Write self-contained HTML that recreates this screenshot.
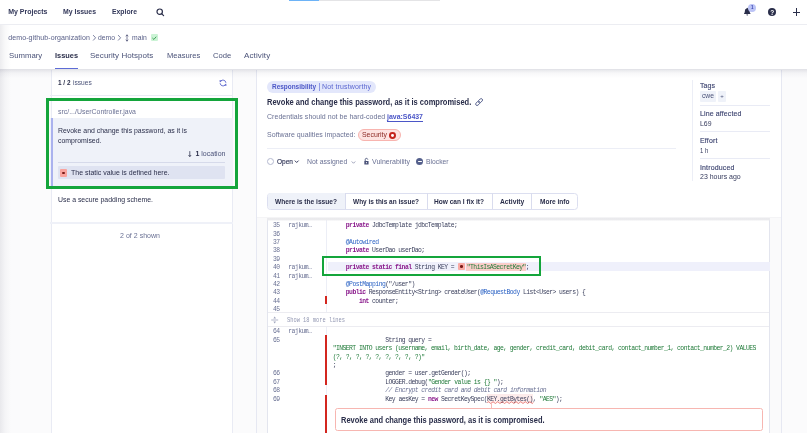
<!DOCTYPE html>
<html lang="en"><head><meta charset="utf-8"><title>Issues - demo</title>
<style>
html,body{margin:0;padding:0;background:#fbfbfc}
#app{will-change:transform;position:relative;width:807px;height:433px;overflow:hidden;font-family:"Liberation Sans", sans-serif;}
#app div,#app svg,#app span.t,#app span.c{position:absolute}
#app svg{overflow:visible}
.t{white-space:nowrap;display:block}
.c{white-space:pre;display:block;font-family:"Liberation Mono", monospace;font-size:6.4px;line-height:8.4px;height:8.4px;letter-spacing:-0.5551px;color:#3a3f5c}
.c.n{color:#6a7194}
</style></head><body><div id="app">
<div style="left:0px;top:0px;width:807px;height:433px;background:#fbfbfc"></div>
<div style="left:50.5px;top:70px;width:182px;height:363px;box-sizing:border-box;background:#fff;border-left:1px solid #e9ebf4;border-right:1px solid #e9ebf4"></div>
<div style="left:255.8px;top:70px;width:526.4px;height:363px;box-sizing:border-box;background:#fff;border-left:1px solid #e6e8f2;border-right:1px solid #e6e8f2"></div>
<span class="t" style="left:58px;top:77.6px;font-size:7px;line-height:9.8px;color:#2a2e4a;font-weight:700;transform:scaleX(0.9174);transform-origin:0 50%;">1 / 2</span>
<span class="t" style="left:73.25px;top:77.6px;font-size:7px;line-height:9.8px;color:#4a5278;transform:scaleX(0.9449);transform-origin:0 50%;">issues</span>
<svg style="left:218.700px;top:78.500px" width="8" height="8" viewBox="0 0 8 8" fill="none" stroke="#4b56c7" stroke-width="0.850" stroke-linecap="butt"><path d="M1.780 2.140A2.900 2.900 0 0 1 6.890 3.750"/><path d="M6.220 5.860A2.900 2.900 0 0 1 1.110 4.250"/><path d="M0.500 1.300L2.900 1.500 0.900 3.500z" fill="#4b56c7" stroke="none"/><path d="M7.500 6.700L5.100 6.500 7.100 4.500z" fill="#4b56c7" stroke="none"/></svg>
<div style="left:50px;top:94.5px;width:182.5px;height:1px;background:#e9ebf4"></div>
<span class="t" style="left:58px;top:107.1px;font-size:7px;line-height:9.8px;color:#6a7194;transform:scaleX(0.9924);transform-origin:0 50%;">src/.../UserController.java</span>
<div style="left:50px;top:118px;width:182.5px;height:67.5px;background:#eff2f9"></div>
<div style="left:50.5px;top:118px;width:2.2px;height:67.5px;background:#aab2ee"></div>
<span class="t" style="left:58px;top:126.1px;font-size:7px;line-height:9.8px;color:#2a2e4a;transform:scaleX(0.9866);transform-origin:0 50%;">Revoke and change this password, as it is</span>
<span class="t" style="left:58px;top:135.6px;font-size:7px;line-height:9.8px;color:#2a2e4a;transform:scaleX(0.9893);transform-origin:0 50%;">compromised.</span>
<svg style="left:188.400px;top:150.600px" width="3.600" height="6" viewBox="0 0 7.200 12" fill="none" stroke="#2a2e4a" stroke-width="1.500" stroke-linecap="round" stroke-linejoin="round"><path d="M3.600 1v10M1.400 8.600L3.600 11l2.200-2.400"/></svg>
<span class="t" style="left:195.6px;top:148.6px;font-size:7px;line-height:9.8px;color:#2a2e4a;font-weight:700;">1</span>
<span class="t" style="left:201.25px;top:148.6px;font-size:7px;line-height:9.8px;color:#4a5278;letter-spacing:0.0137px;">location</span>
<div style="left:58px;top:162px;width:167px;height:1px;background:#d6daea"></div>
<div style="left:58px;top:166px;width:167px;height:13px;background:#dfe3f1;border-radius:1px"></div>
<div style="left:60px;top:169px;width:7px;height:8px;background:#f9a39d;border-radius:1px"></div>
<div style="left:62.1px;top:171.6px;width:2.8px;height:2.8px;background:#7a1a17;border-radius:50%"></div>
<span class="t" style="left:71px;top:168.1px;font-size:7px;line-height:9.8px;color:#2a2e4a;transform:scaleX(0.9965);transform-origin:0 50%;">The static value is defined here.</span>
<span class="t" style="left:58px;top:194.85px;font-size:7px;line-height:9.8px;color:#2a2e4a;transform:scaleX(0.9845);transform-origin:0 50%;">Use a secure padding scheme.</span>
<div style="left:50px;top:222px;width:182.5px;height:1.5px;background:#eff1f8"></div>
<span class="t" style="left:120px;top:230.85px;font-size:7px;line-height:9.8px;color:#6a7194;letter-spacing:0.0247px;">2 of 2 shown</span>
<div style="left:46.4px;top:98.1px;width:192px;height:91.3px;box-sizing:border-box;border:3px solid #14a53b"></div>
<div style="left:267px;top:81px;width:108.5px;height:12px;background:#e3e7fb;border-radius:6px"></div>
<span class="t" style="left:271.75px;top:82.0px;font-size:7px;line-height:9.8px;color:#4b56c7;font-weight:700;transform:scaleX(0.9197);transform-origin:0 50%;">Responsibility</span>
<div style="left:318.6px;top:83.3px;width:0.8px;height:7.6px;background:#8f99e6"></div>
<span class="t" style="left:322px;top:82.0px;font-size:7px;line-height:9.8px;color:#5a66d0;letter-spacing:0.1448px;">Not trustworthy</span>
<span class="t" style="left:267px;top:97.12px;font-size:8.4px;line-height:11.76px;color:#2a2e4a;font-weight:700;transform:scaleX(0.8974);transform-origin:0 50%;">Revoke and change this password, as it is compromised.</span>
<svg style="left:474px;top:97.400px" width="10" height="10" viewBox="0 0 10 10" fill="none" stroke="#55608c" stroke-width="0.9"><g transform="translate(5.100 5.050) rotate(-45)"><rect x="-4.300" y="-1.400" width="5" height="2.800" rx="1.400"/><rect x="-0.700" y="-1.400" width="5" height="2.800" rx="1.400"/></g></svg>
<span class="t" style="left:267px;top:111.6px;font-size:7px;line-height:9.8px;color:#6a7194;letter-spacing:0.0417px;">Credentials should not be hard-coded</span>
<span class="t" style="left:387px;top:111.6px;font-size:7px;line-height:9.8px;color:#4b56c7;font-weight:700;transform:scaleX(0.9944);transform-origin:0 50%;">java:S6437</span>
<div style="left:387px;top:120.6px;width:36px;height:0.7px;background:#4b56c7"></div>
<span class="t" style="left:267px;top:130.1px;font-size:7px;line-height:9.8px;color:#6a7194;letter-spacing:0.0340px;">Software qualities impacted:</span>
<div style="left:357.5px;top:129px;width:43.75px;height:12.25px;box-sizing:border-box;background:#fde3e1;border:1px solid #f8b4af;border-radius:6.2px"></div>
<span class="t" style="left:362px;top:130.2px;font-size:7px;line-height:9.8px;color:#8c2a25;transform:scaleX(0.9883);transform-origin:0 50%;">Security</span>
<div style="left:388.8px;top:131.8px;width:6.9px;height:6.9px;box-sizing:border-box;border:2.3px solid #c4241d;border-radius:50%;background:#fff"></div>
<div style="left:267px;top:148.3px;width:409.25px;height:1px;background:#eceef6"></div>
<div style="left:267.4px;top:158.4px;width:6.9px;height:6.9px;box-sizing:border-box;border:0.8px solid #b4b9d0;border-radius:50%;background:#fff"></div>
<span class="t" style="left:277px;top:157.0px;font-size:7px;line-height:9.8px;color:#33385a;transform:scaleX(0.9343);transform-origin:0 50%;-webkit-text-stroke:0.15px #33385a;">Open</span>
<svg style="left:294.300px;top:159.400px" width="5.400" height="5.400" viewBox="0 0 10 10" fill="none" stroke="#33385a" stroke-width="1.800" stroke-linecap="round" stroke-linejoin="round"><path d="M2 3.500l3 3 3-3"/></svg>
<span class="t" style="left:306.75px;top:157.0px;font-size:7px;line-height:9.8px;color:#6a7194;transform:scaleX(0.9851);transform-origin:0 50%;">Not assigned</span>
<svg style="left:350.5px;top:159.8px" width="5" height="5" viewBox="0 0 10 10" fill="none" stroke="#6a7194" stroke-width="1.3" stroke-linecap="round" stroke-linejoin="round"><path d="M2 3.500l3 3 3-3"/></svg>
<svg style="left:362.500px;top:157.200px" width="6.900" height="8.500" viewBox="0 0 13 16" fill="none" stroke="#4a5278" stroke-width="1.7"><rect x="2.5" y="7.500" width="8" height="6.500" rx="1" fill="#4a5278" stroke="none"/><path d="M4.2 7.500V4.800a2.400 2.400 0 0 1 4.700-.6" stroke-linecap="round"/><circle cx="6.5" cy="10.700" r="1.100" fill="#fff" stroke="none"/></svg>
<span class="t" style="left:372px;top:157.0px;font-size:7px;line-height:9.8px;color:#6a7194;letter-spacing:0.0096px;">Vulnerability</span>
<div style="left:416.3px;top:158.4px;width:7px;height:7px;background:#55608c;border-radius:50%"></div>
<div style="left:418px;top:161.4px;width:3.6px;height:1.1px;background:#fff;border-radius:0.5px"></div>
<span class="t" style="left:425.5px;top:157.0px;font-size:7px;line-height:9.8px;color:#6a7194;transform:scaleX(0.9639);transform-origin:0 50%;">Blocker</span>
<div style="left:691.7px;top:80px;width:0.8px;height:101px;background:#eceef6"></div>
<span class="t" style="left:700px;top:80.7px;font-size:7px;line-height:9.8px;color:#3d4470;letter-spacing:0.0508px;-webkit-text-stroke:0.13px #3d4470;">Tags</span>
<div style="left:699.5px;top:90.5px;width:16.75px;height:11.25px;background:#eff2f9;border-radius:1px"></div>
<span class="t" style="left:702px;top:91.3px;font-size:7px;line-height:9.8px;color:#4a5278;transform:scaleX(0.9636);transform-origin:0 50%;">cwe</span>
<div style="left:718.25px;top:90.5px;width:8px;height:11.25px;background:#eff2f9;border-radius:1px"></div>
<span class="t" style="left:720.3px;top:92.0px;font-size:6px;line-height:8.4px;color:#4a5278;">+</span>
<div style="left:700px;top:105.2px;width:70px;height:0.8px;background:#e9ebf5"></div>
<span class="t" style="left:700px;top:109.1px;font-size:7px;line-height:9.8px;color:#3d4470;letter-spacing:0.1178px;-webkit-text-stroke:0.13px #3d4470;">Line affected</span>
<span class="t" style="left:700px;top:118.6px;font-size:7px;line-height:9.8px;color:#353a5c;transform:scaleX(0.9840);transform-origin:0 50%;">L69</span>
<div style="left:700px;top:131.2px;width:70px;height:0.8px;background:#e9ebf5"></div>
<span class="t" style="left:700px;top:136.35px;font-size:7px;line-height:9.8px;color:#3d4470;letter-spacing:0.1901px;-webkit-text-stroke:0.13px #3d4470;">Effort</span>
<span class="t" style="left:700px;top:145.6px;font-size:7px;line-height:9.8px;color:#353a5c;transform:scaleX(0.8475);transform-origin:0 50%;">1 h</span>
<div style="left:700px;top:158.4px;width:70px;height:0.8px;background:#e9ebf5"></div>
<span class="t" style="left:700px;top:162.6px;font-size:7px;line-height:9.8px;color:#3d4470;letter-spacing:0.1406px;-webkit-text-stroke:0.13px #3d4470;">Introduced</span>
<span class="t" style="left:700px;top:172.1px;font-size:7px;line-height:9.8px;color:#353a5c;transform:scaleX(0.9969);transform-origin:0 50%;">23 hours ago</span>
<div style="left:267px;top:192.5px;width:311px;height:17px;box-sizing:border-box;border:1px solid #dcdff0;border-radius:3.5px;background:#fff"></div>
<div style="left:267.8px;top:193.3px;width:77.2px;height:15.4px;background:#eff2f9;border-radius:3px 0 0 3px"></div>
<div style="left:344.6px;top:193px;width:0.8px;height:16px;background:#d9dcee"></div>
<div style="left:426.6px;top:193px;width:0.8px;height:16px;background:#d9dcee"></div>
<div style="left:492.1px;top:193px;width:0.8px;height:16px;background:#d9dcee"></div>
<div style="left:531.35px;top:193px;width:0.8px;height:16px;background:#d9dcee"></div>
<span class="t" style="left:275px;top:196.92px;font-size:7.4px;line-height:10.36px;color:#2a2e4a;font-weight:700;transform:scaleX(0.8931);transform-origin:0 50%;">Where is the issue?</span>
<span class="t" style="left:353.25px;top:196.92px;font-size:7.4px;line-height:10.36px;color:#2a2e4a;font-weight:700;transform:scaleX(0.8782);transform-origin:0 50%;">Why is this an issue?</span>
<span class="t" style="left:434.25px;top:196.92px;font-size:7.4px;line-height:10.36px;color:#2a2e4a;font-weight:700;transform:scaleX(0.8886);transform-origin:0 50%;">How can I fix it?</span>
<span class="t" style="left:500px;top:196.92px;font-size:7.4px;line-height:10.36px;color:#2a2e4a;font-weight:700;transform:scaleX(0.9081);transform-origin:0 50%;">Activity</span>
<span class="t" style="left:540px;top:196.92px;font-size:7.4px;line-height:10.36px;color:#2a2e4a;font-weight:700;transform:scaleX(0.8868);transform-origin:0 50%;">More info</span>
<div style="left:256.8px;top:216.7px;width:524.4px;height:216.5px;background:#fafafb"></div>
<div style="left:266.9px;top:217.7px;width:503.3px;height:216px;box-sizing:border-box;background:#fff;border:1px solid #e3e5ee;border-top:none"></div>
<div style="left:326.4px;top:219px;width:0.8px;height:93.5px;background:#eceef6"></div>
<div style="left:326.4px;top:326.3px;width:0.8px;height:107px;background:#eceef6"></div>
<span class="c n" style="left:273.1px;top:222.2px">35</span>
<span class="c n" style="left:288.3px;top:222.2px">rajkum…</span>
<span class="c" style="left:345.84px;top:222.2px"><b style="color:#8a1a8c">private</b> JdbcTemplate jdbcTemplate;</span>
<span class="c n" style="left:273.1px;top:230.59px">36</span>
<span class="c n" style="left:273.1px;top:238.98px">37</span>
<span class="c" style="left:345.84px;top:238.98px"><span style="color:#2b62c4">@Autowired</span></span>
<span class="c n" style="left:273.1px;top:247.37px">38</span>
<span class="c" style="left:345.84px;top:247.37px"><b style="color:#8a1a8c">private</b> UserDao userDao;</span>
<span class="c n" style="left:273.1px;top:255.76px">39</span>
<div style="left:327.6px;top:262.25px;width:442.4px;height:8.4px;background:#eff0fb"></div>
<div style="left:457.9px;top:262.6px;width:7.1px;height:7.9px;background:#f9aaa4;border-radius:1px"></div>
<div style="left:460.2px;top:265.2px;width:2.7px;height:2.7px;background:#7a1a17;border-radius:50%"></div>
<div style="left:466.3px;top:262.6px;width:59.8px;height:8px;background:#fbcdc9"></div>
<span class="c n" style="left:273.1px;top:264.15px">40</span>
<span class="c n" style="left:288.3px;top:264.15px">rajkum…</span>
<span class="c" style="left:345.84px;top:264.15px"><b style="color:#8a1a8c">private</b> <b style="color:#8a1a8c">static</b> <b style="color:#8a1a8c">final</b> String KEY = </span>
<span class="c" style="left:466.8px;top:264.15px"><span style="color:#1f7a38">"ThisIsASecretKey"</span>;</span>
<span class="c n" style="left:273.1px;top:272.54px">41</span>
<span class="c n" style="left:288.3px;top:272.54px">rajkum…</span>
<span class="c n" style="left:273.1px;top:280.93px">42</span>
<span class="c" style="left:345.84px;top:280.93px"><span style="color:#2b62c4">@PostMapping</span>("/user")</span>
<span class="c n" style="left:273.1px;top:289.32px">43</span>
<span class="c" style="left:345.84px;top:289.32px"><b style="color:#8a1a8c">public</b> ResponseEntity&lt;String&gt; createUser(<span style="color:#2b62c4">@RequestBody</span> List&lt;User&gt; users) {</span>
<span class="c n" style="left:273.1px;top:297.71px">44</span>
<span class="c" style="left:358.98px;top:297.71px"><b style="color:#8a1a8c">int</b> counter;</span>
<span class="c n" style="left:273.1px;top:306.1px">45</span>
<div style="left:324.6px;top:296.2px;width:2.2px;height:8px;background:#d3261f"></div>
<div style="left:267.9px;top:312.1px;width:501.3px;height:14.5px;box-sizing:border-box;background:#fff;border-top:1.7px solid #ececf1;border-bottom:1.7px solid #ececf1"></div>
<span class="t" style="left:286.75px;top:316.89px;font-size:6.3px;line-height:8.82px;color:#9297b2;transform:scaleX(0.8533);transform-origin:0 50%;font-family:'Liberation Mono',monospace;">Show 18 more lines</span>
<svg style="left:271.200px;top:315.600px" width="7.400" height="8" viewBox="0 0 7.400 8" fill="#9ea3bb"><rect x="0.200" y="3.600" width="7" height="0.800"/><path d="M3.700 0.600L5 2.500H2.400zM3.700 7.400L5 5.500H2.400z"/></svg>
<span class="c n" style="left:273.1px;top:328.3px">64</span>
<span class="c n" style="left:288.3px;top:328.3px">rajkum…</span>
<span class="c n" style="left:273.1px;top:336.71px">65</span>
<span class="c" style="left:385.27px;top:336.71px">String query =</span>
<span class="c" style="left:332.7px;top:345.12px"><span style="color:#1f7a38">"INSERT INTO users (username, email, birth_date, age, gender, credit_card, debit_card, contact_number_1, contact_number_2) VALUES</span></span>
<span class="c" style="left:332.7px;top:353.53px"><span style="color:#1f7a38">(?, ?, ?, ?, ?, ?, ?, ?, ?)"</span></span>
<span class="c" style="left:332.7px;top:361.94px">;</span>
<span class="c n" style="left:273.1px;top:370.35px">66</span>
<span class="c" style="left:385.27px;top:370.35px">gender = user.getGender();</span>
<span class="c n" style="left:273.1px;top:378.76px">67</span>
<span class="c" style="left:385.27px;top:378.76px">LOGGER.debug(<span style="color:#1f7a38">"Gender value is {} "</span>);</span>
<span class="c n" style="left:273.1px;top:387.17px">68</span>
<span class="c" style="left:385.27px;top:387.17px"><i style="color:#6a7194">// Encrypt credit card and debit card information</i></span>
<div style="left:487.3px;top:393.88px;width:46.2px;height:8px;background:#fdeceb"></div>
<span class="c n" style="left:273.1px;top:395.58px">69</span>
<span class="c" style="left:385.27px;top:395.58px">Key aesKey = <b style="color:#8a1a8c">new</b> SecretKeySpec(KEY.getBytes(), <span style="color:#1f7a38">"AES"</span>);</span>
<div style="left:324.6px;top:334.8px;width:2.2px;height:50.7px;background:#d3261f"></div>
<div style="left:324.6px;top:394.5px;width:2.2px;height:40px;background:#d3261f"></div>
<svg style="left:0;top:0" width="807" height="433" viewBox="0 0 807 433" fill="none"><path d="M487.3 402.6 q1.152 -1.6 2.305 0 q1.152 1.6 2.305 0 q1.152 -1.6 2.305 0 q1.152 1.6 2.305 0 q1.152 -1.6 2.305 0 q1.152 1.6 2.305 0 q1.152 -1.6 2.305 0 q1.152 1.6 2.305 0 q1.152 -1.6 2.305 0 q1.152 1.6 2.305 0 q1.152 -1.6 2.305 0 q1.152 1.6 2.305 0 q1.152 -1.6 2.305 0 q1.152 1.6 2.305 0 q1.152 -1.6 2.305 0 q1.152 1.6 2.305 0 q1.152 -1.6 2.305 0 q1.152 1.6 2.305 0 q1.152 -1.6 2.305 0 q1.152 1.6 2.305 0" stroke="#e0443c" stroke-width="0.7"/><path d="M491.5 403.500v5" stroke="#f6a9a4" stroke-width="0.8"/></svg>
<div style="left:335px;top:408.3px;width:427.5px;height:22.9px;box-sizing:border-box;border:1px solid #f7b6b1;border-radius:2.5px;background:#fff"></div>
<span class="t" style="left:341.25px;top:414.72px;font-size:8.4px;line-height:11.76px;color:#2a2e4a;font-weight:700;transform:scaleX(0.8944);transform-origin:0 50%;">Revoke and change this password, as it is compromised.</span>
<div style="left:321.9px;top:256px;width:219.2px;height:19.8px;box-sizing:border-box;border:2.6px solid #14a53b"></div>
<div style="left:256.8px;top:216.7px;width:524.4px;height:1.6px;background:#f4f4f6"></div>
<div style="left:266.9px;top:218.2px;width:503.3px;height:3.2px;background:linear-gradient(#eaeaed 0,#ebebee 60%,rgba(235,235,238,0))"></div>
<div style="left:0px;top:69.4px;width:807px;height:9px;background:linear-gradient(rgba(30,35,70,0.12),rgba(30,35,70,0.035) 45%,rgba(30,35,70,0))"></div>
<div style="left:0px;top:0px;width:807px;height:69.4px;background:#fff"></div>
<div style="left:0px;top:24px;width:807px;height:1px;background:#ecedf2"></div>
<div style="left:289.3px;top:0px;width:29.5px;height:1px;background:#6db3f7"></div>
<div style="left:318.8px;top:0px;width:120.8px;height:1px;background:#e4e4e6"></div>
<span class="t" style="left:8.2px;top:6.7px;font-size:7px;line-height:9.8px;color:#33385a;font-weight:700;letter-spacing:0.0003px;">My Projects</span>
<span class="t" style="left:63px;top:6.7px;font-size:7px;line-height:9.8px;color:#33385a;font-weight:700;transform:scaleX(0.9860);transform-origin:0 50%;">My Issues</span>
<span class="t" style="left:111.75px;top:6.7px;font-size:7px;line-height:9.8px;color:#33385a;font-weight:700;transform:scaleX(0.9732);transform-origin:0 50%;">Explore</span>
<svg style="left:156.4px;top:8.2px" width="8.5" height="8.5" viewBox="0 0 17 17" fill="none" stroke="#2a2e4a" stroke-width="2.4" stroke-linecap="round"><circle cx="7.400" cy="7.400" r="5.400"/><path d="M11.600 11.600L15.200 15.200"/></svg>
<svg style="left:742.800px;top:7.200px" width="8.500" height="9" viewBox="0 0 17 18" fill="#2a2e4a"><path d="M8.500 1.500a1.200 1.200 0 0 1 1.200 1.200v.5a4.800 4.800 0 0 1 3.600 4.700c0 2.800.7 4.100 1.700 5.100v.8H2v-.8c1-1 1.700-2.300 1.700-5.100a4.800 4.800 0 0 1 3.600-4.700v-.5A1.200 1.200 0 0 1 8.500 1.500zM6.700 15h3.600a1.800 1.800 0 0 1-3.600 0z"/></svg>
<div style="left:748px;top:4px;width:8px;height:8px;background:#bcc4f6;border-radius:50%"></div>
<span class="t" style="left:751px;top:4.85px;font-size:4.5px;line-height:6.3px;color:#3b46b0;font-weight:700;">1</span>
<div style="left:768px;top:8.3px;width:7.9px;height:7.9px;background:#2a2e4a;border-radius:50%"></div>
<span class="t" style="left:770.3px;top:7.95px;font-size:6.5px;line-height:9.1px;color:#fff;font-weight:700;">?</span>
<div style="left:792.8px;top:11.6px;width:7.4px;height:1px;background:#2a2e4a"></div>
<div style="left:796px;top:8.4px;width:1px;height:7.4px;background:#2a2e4a"></div>
<span class="t" style="left:8.25px;top:33.1px;font-size:7px;line-height:9.8px;color:#565d86;letter-spacing:0.0983px;">demo-github-organization</span>
<svg style="left:92.600px;top:35.300px" width="3" height="5.600" viewBox="0 0 3 5.600" fill="none" stroke="#5a6188" stroke-width="0.800" stroke-linecap="round" stroke-linejoin="round"><path d="M0.400 0.400L2.600 2.800 0.400 5.200"/></svg>
<span class="t" style="left:98px;top:33.1px;font-size:7px;line-height:9.8px;color:#565d86;transform:scaleX(0.9706);transform-origin:0 50%;">demo</span>
<svg style="left:117.600px;top:35.300px" width="3" height="5.600" viewBox="0 0 3 5.600" fill="none" stroke="#5a6188" stroke-width="0.800" stroke-linecap="round" stroke-linejoin="round"><path d="M0.400 0.400L2.600 2.800 0.400 5.200"/></svg>
<svg style="left:124.800px;top:34.100px" width="4" height="8" viewBox="0 0 8 16" fill="none" stroke="#3a4068" stroke-width="1.300" stroke-linecap="round" stroke-linejoin="round"><path d="M4 2v12M2 4L4 1.800 6 4M2 12l2 2.200L6 12"/></svg>
<span class="t" style="left:132px;top:33.1px;font-size:7px;line-height:9.8px;color:#565d86;transform:scaleX(0.9712);transform-origin:0 50%;">main</span>
<div style="left:151.1px;top:34.2px;width:7px;height:7.3px;background:#cbf3d5;border-radius:1px"></div>
<svg style="left:152.300px;top:35.900px" width="4.700" height="4.300" viewBox="0 0 10 9" fill="none" stroke="#1f8a3a" stroke-width="1.700" stroke-linecap="round" stroke-linejoin="round"><path d="M1.500 4.800l2.500 2.400 4.500-5.200"/></svg>
<span class="t" style="left:8.75px;top:50.4px;font-size:8px;line-height:11.2px;color:#4a5278;transform:scaleX(0.9712);transform-origin:0 50%;">Summary</span>
<span class="t" style="left:54.5px;top:50.4px;font-size:8px;line-height:11.2px;color:#2a2e4a;font-weight:700;transform:scaleX(0.9235);transform-origin:0 50%;">Issues</span>
<div style="left:54.5px;top:67.6px;width:23px;height:1.4px;background:#5d6cd6"></div>
<span class="t" style="left:90px;top:50.4px;font-size:8px;line-height:11.2px;color:#4a5278;letter-spacing:0.0322px;">Security Hotspots</span>
<span class="t" style="left:166.75px;top:50.4px;font-size:8px;line-height:11.2px;color:#4a5278;transform:scaleX(0.9466);transform-origin:0 50%;">Measures</span>
<span class="t" style="left:213px;top:50.4px;font-size:8px;line-height:11.2px;color:#4a5278;transform:scaleX(0.9542);transform-origin:0 50%;">Code</span>
<span class="t" style="left:244px;top:50.4px;font-size:8px;line-height:11.2px;color:#4a5278;letter-spacing:0.1133px;">Activity</span>
<div style="left:0px;top:25px;width:11px;height:408px;background:linear-gradient(90deg,rgba(40,40,70,0.085),rgba(40,40,70,0.03) 45%,rgba(40,40,70,0))"></div>
</div></body></html>
